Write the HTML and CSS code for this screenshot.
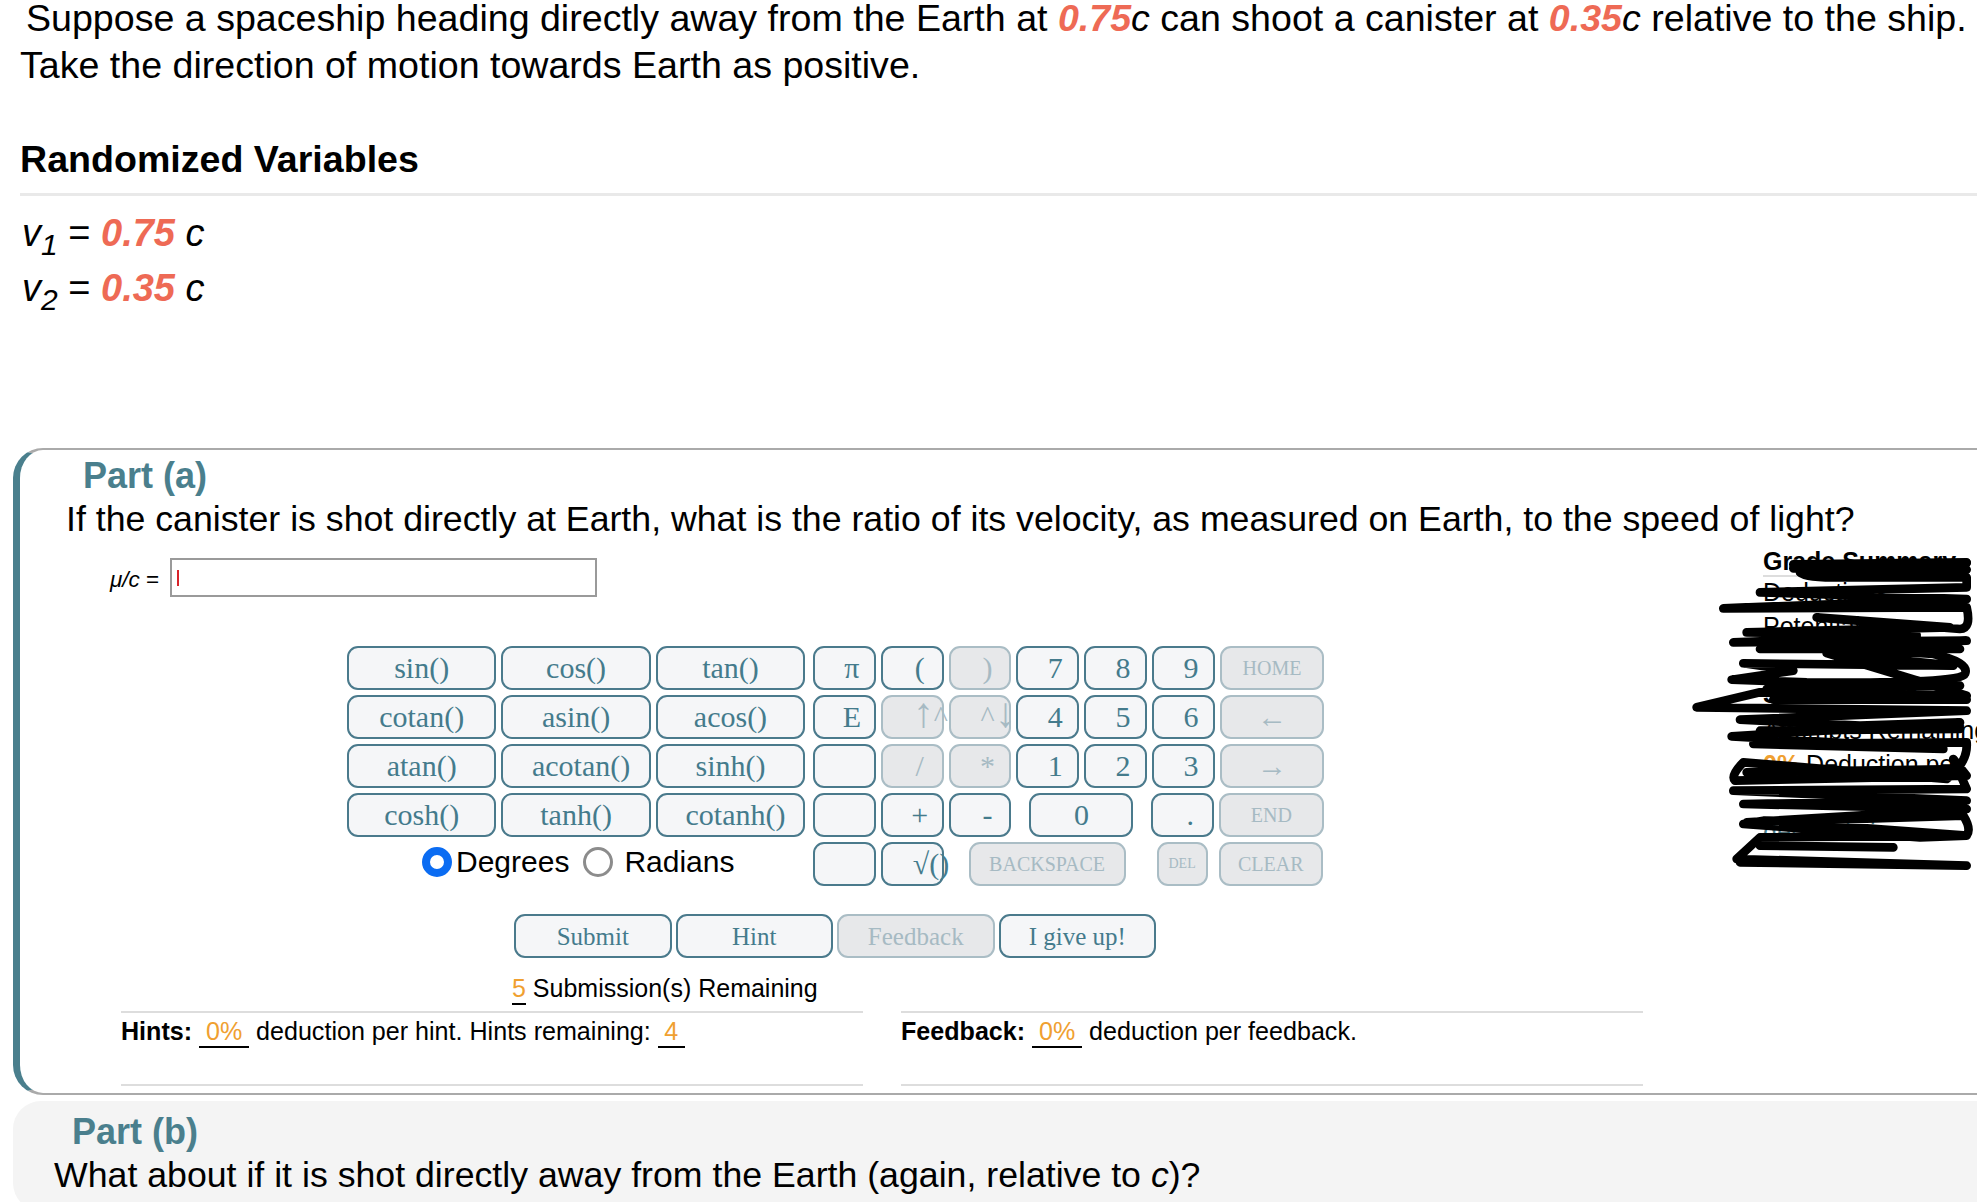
FILE: index.html
```html
<!DOCTYPE html>
<html lang="en">
<head>
<meta charset="utf-8">
<title>Relativistic velocity problem</title>
<link rel="stylesheet" href="styles.css">
</head>
<body>
<p class="problem"><span class="first-line">Suppose a spaceship heading directly away from the Earth at <b class="val">0.75</b><i>c</i> can shoot a canister at <b class="val">0.35</b><i>c</i> relative to the ship.</span><br>Take the direction of motion towards Earth as positive.</p>
<h2 class="vars-title">Randomized Variables</h2>
<div class="vars">
  <div><i>v<sub class="idx">1</sub></i> = <b class="val">0.75</b> <i>c</i></div>
  <div><i>v<sub class="idx">2</sub></i> = <b class="val">0.35</b> <i>c</i></div>
</div>

<section class="part-a">
  <h3 class="part-title">Part (a)</h3>
  <p class="question">If the canister is shot directly at Earth, what is the ratio of its velocity, as measured on Earth, to the speed of light?</p>
  <div class="part-body">
    <div class="work">
      <div class="answer">
        <label class="answer-label"><i>μ/c</i> =</label>
        <div class="answer-box"><span class="caret"></span></div>
      </div>
      <div class="keypad">
        <div class="key-row">
          <div class="fn-group"><button class="key fn">sin()</button><button class="key fn">cos()</button><button class="key fn">tan()</button></div>
          <button class="key sm">π</button><button class="key sm">(</button><button class="key sm off">)</button><button class="key sm">7</button><button class="key sm">8</button><button class="key sm">9</button><button class="key nav off">HOME</button>
        </div>
        <div class="key-row">
          <div class="fn-group"><button class="key fn">cotan()</button><button class="key fn">asin()</button><button class="key fn">acos()</button></div>
          <button class="key sm">E</button><button class="key sm off over"><span class="arrow">↑</span>^</button><button class="key sm off over">^<span class="arrow">↓</span></button><button class="key sm">4</button><button class="key sm">5</button><button class="key sm">6</button><button class="key nav off wide-arrow">←</button>
        </div>
        <div class="key-row">
          <div class="fn-group"><button class="key fn">atan()</button><button class="key fn fn-long">acotan()</button><button class="key fn">sinh()</button></div>
          <button class="key sm"></button><button class="key sm off">/</button><button class="key sm off">*</button><button class="key sm">1</button><button class="key sm">2</button><button class="key sm">3</button><button class="key nav off wide-arrow">→</button>
        </div>
        <div class="key-row">
          <div class="fn-group"><button class="key fn">cosh()</button><button class="key fn">tanh()</button><button class="key fn fn-long">cotanh()</button></div>
          <button class="key sm"></button><button class="key sm">+</button><button class="key sm">-</button><button class="key zero">0</button><button class="key sm">.</button><button class="key nav off">END</button>
        </div>
        <div class="key-row">
          <div class="fn-group angle">
            <input class="radio" type="radio" name="angle" checked><span class="radio-text">Degrees</span>
            <input class="radio radio-second" type="radio" name="angle"><span class="radio-text">Radians</span>
          </div>
          <button class="key sm"></button><button class="key sm over">√()</button><button class="key back off">BACKSPACE</button><button class="key del off">DEL</button><button class="key nav off">CLEAR</button>
        </div>
      </div>
      <div class="actions">
        <button class="key act">Submit</button><button class="key act">Hint</button><button class="key act off">Feedback</button><button class="key act">I give up!</button>
      </div>
      <div class="remaining"><span class="count">5</span> Submission(s) Remaining</div>
      <div class="info">
        <div class="info-col"><b>Hints:</b> <span class="count pct">0%</span> deduction per hint. Hints remaining: <span class="count num">4</span></div>
        <div class="info-col"><b>Feedback:</b> <span class="count pct">0%</span> deduction per feedback.</div>
      </div>
    </div>
    <aside class="summary">
      <h4 class="summary-title">Grade Summary</h4>
      <div class="summary-row first">Deductions</div>
      <div class="summary-row">Potential</div>
      <div class="summary-title-2">Submissions</div>
      <div class="summary-row">Attempts Remaining</div>
      <div class="summary-row"><span class="count-plain">0%</span> Deduction per</div>
      <div class="summary-row link">detailed view</div>
      <svg class="scribble" viewBox="0 0 951 1080" aria-hidden="true">
        <path d="M400 118 L920 102 L420 125 Q420 145 520 145 L920 145 L920 175 L300 190 L920 210 L190 238 L920 235 Q935 300 900 300 L470 265 L870 295 L260 310 L770 318 L220 340 L920 335 L460 352 L820 375 Q930 400 915 435 Q905 465 440 460 L215 452 L400 425 L250 403 L880 410 L500 372 L920 500 L300 490 L110 535 L920 545 L240 572 L600 590 L900 580 L215 622 L850 660 L280 645 L920 640 Q925 700 860 750 L250 700 Q210 740 225 755 L920 740 L880 690 L920 780 L220 785 L920 815 L250 825 L920 840 L260 880 L910 860 Q935 900 920 920 L310 875 L250 885 L780 925 L920 920 L300 925 L230 990 L920 1010 L240 1000" />
        <path d="M400 106 L920 100 M420 130 L920 122 M300 360 L900 360 M320 480 L900 470 M340 512 L920 512 M300 605 L900 600 M260 730 L900 720 M300 950 L700 955" />
      </svg>
    </aside>
  </div>
</section>

<section class="part-b">
  <h3 class="part-title">Part (b)</h3>
  <p class="question">What about if it is shot directly away from the Earth (again, relative to <i>c</i>)?</p>
</section>
</body>
</html>
```
FILE: styles.css
```css
* { box-sizing: border-box; }
html, body { margin: 0; padding: 0; }
body {
  width: 1977px;
  height: 1202px;
  overflow: hidden;
  background: #fff;
  color: #000;
  font-family: "Liberation Sans", Arial, sans-serif;
}
h2, h3, h4, p { margin: 0; }
.problem {
  margin-top: -5px;
  padding-left: 20px;
  font-size: 37.6px;
  line-height: 47px;
  white-space: nowrap;
}
.first-line { margin-left: 6px; }
.val { color: #ee6a55; font-style: italic; font-weight: 700; }
.vars-title {
  margin: 50px 0 0 20px;
  padding-bottom: 14px;
  border-bottom: 3px solid #e9e9e9;
  font-size: 37.6px;
  line-height: 40px;
  font-weight: 700;
}
.vars {
  margin: 10px 0 0 22px;
  font-size: 38px;
  line-height: 55px;
}
.idx { font-size: 30px; line-height: 0; vertical-align: -9px; }

.part-a {
  margin: 132px 0 0 13px;
  padding: 6px 0 7px;
  border: 2px solid #aaa;
  border-left: 7px solid #4a7f8d;
  border-right: 0;
  border-radius: 30px 0 0 30px;
}
.part-title {
  padding-left: 63px;
  color: #4a7f8d;
  font-size: 36px;
  line-height: 40px;
  font-weight: 700;
}
.question {
  margin-top: 3px;
  padding-left: 46px;
  font-size: 35.7px;
  line-height: 40px;
  white-space: nowrap;
}
.part-body { display: flex; }
.work { width: 1743px; flex: none; }
.answer {
  display: flex;
  align-items: center;
  margin-top: 19px;
  padding-left: 90px;
}
.answer-label { width: 60px; padding-top: 4px; font-size: 22.5px; white-space: nowrap; }
.answer-box {
  display: flex;
  align-items: center;
  width: 427px;
  height: 39px;
  padding-left: 5px;
  border: 2px solid #9a9a9a;
}
.caret { width: 2px; height: 16px; background: #d8232a; }

.keypad {
  display: flex;
  flex-direction: column;
  gap: 5px;
  margin-top: 49px;
  padding-left: 327px;
}
.key-row { display: flex; gap: 5px; }
.fn-group { display: flex; gap: 5px; width: 458px; margin-right: 3px; flex: none; }
.key {
  flex: none;
  height: 44px;
  padding: 0;
  border: 2px solid #4a7a8c;
  border-radius: 11px;
  background: #f5f6f8;
  color: #447b8c;
  font-family: "Liberation Serif", "Times New Roman", serif;
  font-size: 30px;
  line-height: 1;
  white-space: nowrap;
}
.key.off { background: #e7e8ea; border-color: #aabdc5; color: #a6bac3; }
.fn { width: 149.4px; }
.fn-long { padding-left: 10px; }
.sm { width: 62.8px; padding-left: 15px; }
.over { padding-left: 30px; text-align: left; overflow: visible; }
.arrow { font-size: 42px; line-height: 0; }
.nav { width: 104.4px; font-size: 20px; }
.wide-arrow { font-size: 30px; }
.zero { width: 104px; margin: 0 13px; }
.back { width: 157px; margin: 0 26px 0 20px; font-size: 20px; }
.del { width: 51px; margin-right: 6px; font-size: 14px; }
.angle { align-items: center; gap: 0; padding: 0 0 4px 75px; font-size: 30px; }
.radio {
  appearance: none;
  flex: none;
  width: 30px;
  height: 30px;
  margin: 0 4px 0 0;
  border: 3px solid #8c8c8c;
  border-radius: 50%;
  background: #fff;
}
.radio:checked { border: 8px solid #0b6cf2; }
.radio-second { margin: 0 11px 0 14px; }
.radio-text { line-height: 1; }

.actions { display: flex; gap: 4px; margin: 28px 0 0 494px; }
.act { width: 157.5px; font-size: 25px; }
.remaining {
  height: 30px;
  margin: 15px 0 0 492px;
  font-size: 25px;
  line-height: 30px;
}
.count {
  display: inline-block;
  color: #f0a030;
  font-weight: 400;
  border-bottom: 2px solid #000;
  line-height: 30px;
}
.info { display: flex; gap: 38px; margin: 8px 0 0 101px; }
.info-col {
  width: 742px;
  height: 75px;
  padding-top: 2px;
  border-top: 2px solid #ddd;
  border-bottom: 2px solid #ddd;
  font-size: 25.1px;
  line-height: 32px;
  white-space: nowrap;
}
.pct { width: 50px; text-align: center; }
.num { width: 27px; margin-left: 0; text-align: center; }

.summary {
  position: relative;
  flex: none;
  width: 207px;
  margin-top: 7px;
  font-size: 25px;
  line-height: 30px;
  white-space: nowrap;
}
.summary-title { height: 31px; border-bottom: 2px solid #ddd; font-size: 25px; font-weight: 700; }
.summary-row.first { margin-top: 0; }
.summary-row { margin-top: 4px; }
.summary-title-2 { margin-top: 38px; border-bottom: 2px solid #ddd; font-weight: 700; }
.count-plain { color: #f0a030; font-weight: 700; }
.link { margin-top: 38px; color: #4a7f8d; }
.scribble {
  position: absolute;
  left: -103px;
  top: -17px;
  width: 317px;
  height: 360px;
  overflow: visible;
}
.scribble path {
  fill: none;
  stroke: #000;
  stroke-width: 26;
  stroke-linecap: round;
  stroke-linejoin: round;
}

.part-b {
  height: 110px;
  margin: 6px 0 0 13px;
  padding-top: 11px;
  background: #f4f4f4;
  border-radius: 28px 0 0 28px;
}
.part-b .part-title { padding-left: 59px; }
.part-b .question { margin-top: 3px; padding-left: 41px; }
```
